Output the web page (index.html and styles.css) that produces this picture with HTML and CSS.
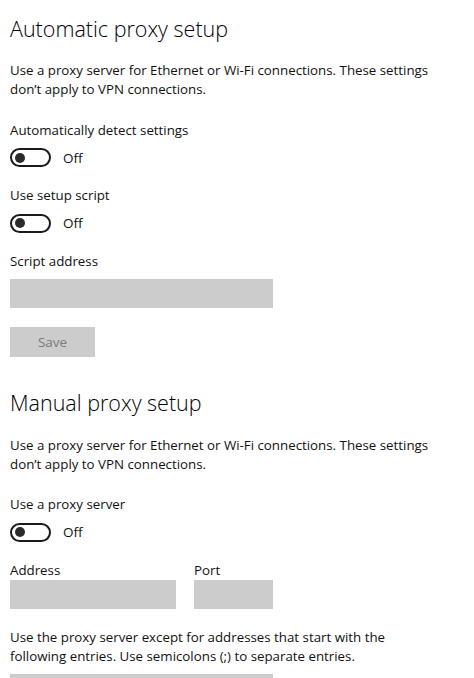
FILE: index.html
```html
<!DOCTYPE html>
<html lang="en">
<head>
    <meta charset="UTF-8">
    <meta name="viewport" content="width=device-width, initial-scale=1.0">
    <title>Proxy</title>
    <link rel="stylesheet" href="styles.css">
</head>
<body>
    <div class="page">
        <h1>Automatic proxy setup</h1>
        <p class="desc">Use a proxy server for Ethernet or Wi-Fi connections. These settings don’t apply to VPN connections.</p>

        <div class="label first">Automatically detect settings</div>
        <div class="switch-row">
            <span class="switch"><span class="knob"></span></span>
            <span class="state">Off</span>
        </div>

        <div class="label">Use setup script</div>
        <div class="switch-row">
            <span class="switch"><span class="knob"></span></span>
            <span class="state">Off</span>
        </div>

        <div class="label">Script address</div>
        <div class="field wide"></div>
        <button class="save" disabled>Save</button>

        <h2>Manual proxy setup</h2>
        <p class="desc">Use a proxy server for Ethernet or Wi-Fi connections. These settings don’t apply to VPN connections.</p>

        <div class="label first">Use a proxy server</div>
        <div class="switch-row">
            <span class="switch"><span class="knob"></span></span>
            <span class="state">Off</span>
        </div>

        <div class="addr-row">
            <div class="addr">
                <div class="label tight">Address</div>
                <div class="field"></div>
            </div>
            <div class="port">
                <div class="label tight">Port</div>
                <div class="field"></div>
            </div>
        </div>

        <p class="desc except">Use the proxy server except for addresses that start with the following entries. Use semicolons (;) to separate entries.</p>
        <div class="field wide"></div>
    </div>
</body>
</html>
```

FILE: styles.css
```css
body {
    font-family: "Open Sans", "Noto Sans", Arial, sans-serif;
    background-color: #ffffff;
    color: #111111;
    margin: 0;
    padding: 0;
}
.page {
    padding: 13px 10px 0 10px;
}
h1, h2 {
    font-size: 21.5px;
    font-weight: 300;
    line-height: 32px;
    margin: 0;
    color: #000000;
}
h2 {
    margin-top: 30px;
}
.desc {
    font-size: 13.3px;
    line-height: 19px;
    margin: 16px 0 0;
    width: 430px;
}
h2 + .desc {
    margin-top: 17px;
}
.label {
    font-size: 13.3px;
    line-height: 19px;
    margin-top: 18.5px;
}
.label.first {
    margin-top: 21.5px;
}
.label.tight {
    margin-top: 0;
}
.switch-row {
    display: flex;
    align-items: center;
    margin-top: 8px;
    height: 20px;
}
.switch {
    box-sizing: border-box;
    width: 41px;
    height: 19px;
    border: 2px solid #1a1a1a;
    border-radius: 10px;
    display: flex;
    align-items: center;
    padding-left: 3px;
}
.knob {
    width: 10px;
    height: 10px;
    border-radius: 50%;
    background-color: #2b2b2b;
}
.state {
    font-size: 13.5px;
    margin-left: 12px;
}
.field {
    height: 29px;
    background-color: #cccccc;
}
.field.wide {
    width: 263px;
    margin-top: 8px;
}
.save {
    display: block;
    width: 85px;
    height: 30px;
    margin-top: 19px;
    border: none;
    background-color: #cccccc;
    color: #7a7a7a;
    font-family: inherit;
    font-size: 13.5px;
    padding: 0;
}
.addr-row {
    display: flex;
    gap: 18px;
    margin-top: 18.5px;
}
.addr {
    width: 166px;
}
.port {
    width: 79px;
}
.except {
    margin-top: 19px;
}
```
